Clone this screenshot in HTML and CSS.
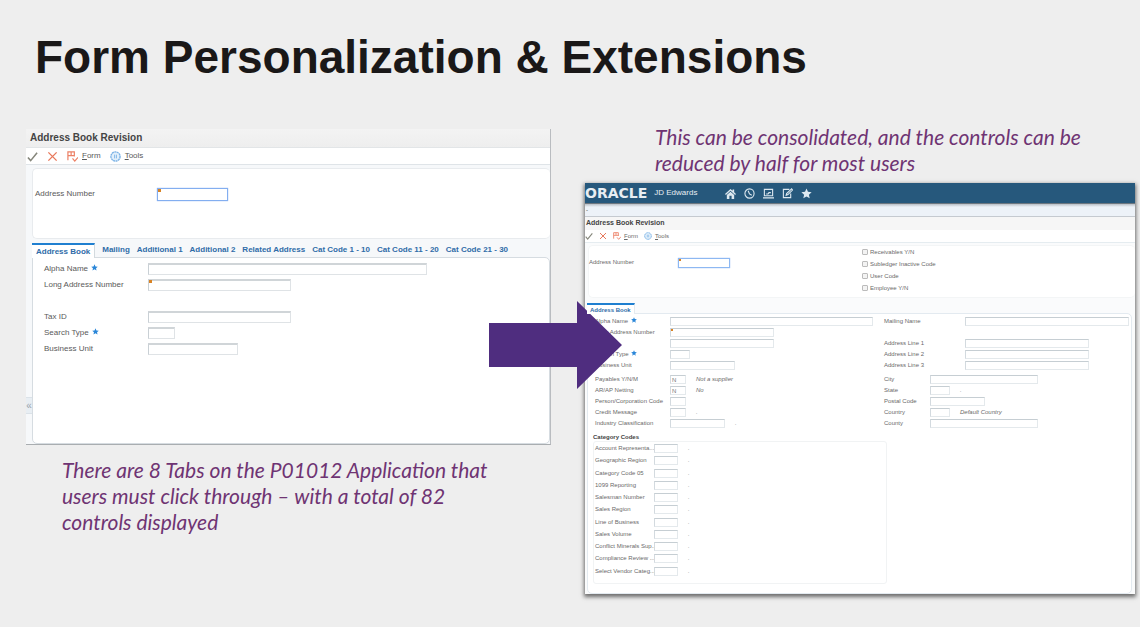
FILE: index.html
```html
<!DOCTYPE html>
<html lang="en">
<head>
    <meta charset="UTF-8">
    <meta name="viewport" content="width=device-width, initial-scale=1.0">
    <title>Form Personalization &amp; Extensions</title>
    <link rel="stylesheet" href="styles.css">
</head>
<body>
    <!-- Shared icons -->
    <svg class="sprite" aria-hidden="true">
        <symbol id="i-check" viewBox="0 0 12 12"><path d="M1 7l3 3.500L11 2" fill="none" stroke="#85867b" stroke-width="1.700"/></symbol>
        <symbol id="i-cross" viewBox="0 0 12 12"><path d="M1.500 1.500l9 9M10.500 1.500l-9 9" fill="none" stroke="#e8795c" stroke-width="1.500"/></symbol>
        <symbol id="i-form" viewBox="0 0 12 12"><path d="M1 10V1h7v5M1 5h7M4.500 1v4M6 8l2.500 3L12 7" fill="none" stroke="#ec8065" stroke-width="1.300"/></symbol>
        <symbol id="i-gear" viewBox="0 0 12 12"><circle cx="6" cy="6" r="5" fill="#e3f0fb" stroke="#7cb3e6" stroke-width="1.500" stroke-dasharray="2.200 .5"/><path d="M5 4v4M7 4v4" fill="none" stroke="#7cb3e6"/></symbol>
        <symbol id="i-star" viewBox="0 0 12 12"><path d="M6 .5l1.600 3.700 4 .4-3 2.700.9 4L6 9.200l-3.500 2.100.9-4-3-2.700 4-.4z"/></symbol>
    </svg>

    <main class="slide">
        <h1>Form Personalization &amp; Extensions</h1>

        <div class="columns">
            <section class="before">
                <div class="screen">
                    <h2 class="form-title">Address Book Revision</h2>
                    <div class="toolbar">
                        <button aria-label="OK"><svg><use href="#i-check"/></svg></button>
                        <button aria-label="Cancel"><svg><use href="#i-cross"/></svg></button>
                        <button><svg><use href="#i-form"/></svg><span><u>F</u>orm</span></button>
                        <button><svg><use href="#i-gear"/></svg><span><u>T</u>ools</span></button>
                    </div>
                    <div class="header-panel">
                        <label for="b-number">Address Number</label>
                        <span class="key required-mark"><input id="b-number" type="text"></span>
                    </div>
                    <div class="tabs">
                        <button class="active">Address Book</button>
                        <button>Mailing</button>
                        <button>Additional 1</button>
                        <button>Additional 2</button>
                        <button>Related Address</button>
                        <button>Cat Code 1 - 10</button>
                        <button>Cat Code 11 - 20</button>
                        <button>Cat Code 21 - 30</button>
                    </div>
                    <div class="tab-body">
                        <div class="field"><label for="b-alpha">Alpha Name <svg class="star"><use href="#i-star"/></svg></label><input id="b-alpha" class="w-full" type="text"></div>
                        <div class="field"><label for="b-long">Long Address Number</label><span class="required-mark w-half"><input id="b-long" type="text"></span></div>
                        <div class="field"></div>
                        <div class="field"><label for="b-tax">Tax ID</label><input id="b-tax" class="w-half" type="text"></div>
                        <div class="field"><label for="b-search">Search Type <svg class="star"><use href="#i-star"/></svg></label><input id="b-search" class="w-code" type="text"></div>
                        <div class="field"><label for="b-unit">Business Unit</label><input id="b-unit" class="w-unit" type="text"></div>
                    </div>
                    <button class="collapse">«</button>
                </div>
                <p class="caption">There are 8 Tabs on the P01012 Application that users must click through – with a total of 82 controls displayed</p>
            </section>

            <section class="after">
                <p class="caption">This can be consolidated, and the controls can be reduced by half for most users</p>
                <div class="screen small">
                    <div class="navbar">
                        <span class="oracle">ORACLE</span><span class="product">JD Edwards</span>
                        <nav>
                            <button aria-label="Home"><svg viewBox="0 0 12 12"><path d="M6 1L0 6.500l1 1 5-4.500 5 4.500 1-1-2-1.900V1.500H8.300V3z"/><path d="M2 7.500L6 4l4 3.500V12H7.200V8.500H4.800V12H2z"/></svg></button>
                            <button aria-label="Recent"><svg viewBox="0 0 12 12"><circle cx="6" cy="6" r="5" class="line"/><path d="M4.500 3L6 6.500l2.500 1.500" class="line"/></svg></button>
                            <button aria-label="Reports"><svg viewBox="0 0 12 12"><path d="M1.500 1.500h9v7h-9zM0 10.800h12M3.500 6.500h2l1-1.500h2" class="line"/></svg></button>
                            <button aria-label="Edit"><svg viewBox="0 0 12 12"><path d="M8 1.500H1.500v9h8V6M4.500 8l.5-2 5.500-5 1 1.200-5 5z" class="line"/></svg></button>
                            <button aria-label="Favorites"><svg><use href="#i-star"/></svg></button>
                        </nav>
                    </div>
                    <div class="crumbs">-</div>
                    <h2 class="form-title">Address Book Revision</h2>
                    <div class="toolbar">
                        <button aria-label="OK"><svg><use href="#i-check"/></svg></button>
                        <button aria-label="Cancel"><svg><use href="#i-cross"/></svg></button>
                        <button><svg><use href="#i-form"/></svg><span><u>F</u>orm</span></button>
                        <button><svg><use href="#i-gear"/></svg><span><u>T</u>ools</span></button>
                    </div>
                    <div class="header-panel">
                        <div class="number">
                            <label for="a-number">Address Number</label>
                            <span class="key required-mark"><input id="a-number" type="text"></span>
                        </div>
                        <div class="checks">
                            <label><input type="checkbox"> Receivables Y/N</label>
                            <label><input type="checkbox"> Subledger Inactive Code</label>
                            <label><input type="checkbox"> User Code</label>
                            <label><input type="checkbox"> Employee Y/N</label>
                        </div>
                    </div>
                    <div class="tabs"><button class="active">Address Book</button></div>
                    <div class="tab-body">
                        <div class="pair">
                            <div class="group">
                                <div class="field"><label for="a-alpha">Alpha Name <svg class="star"><use href="#i-star"/></svg></label><input id="a-alpha" class="w-full" type="text"></div>
                                <div class="field"><label for="a-long">Long Address Number</label><span class="required-mark w-half"><input id="a-long" type="text"></span></div>
                                <div class="field"><label for="a-tax">Tax ID</label><input id="a-tax" class="w-half" type="text"></div>
                                <div class="field"><label for="a-search">Search Type <svg class="star"><use href="#i-star"/></svg></label><input id="a-search" class="w-code" type="text"></div>
                                <div class="field"><label for="a-unit">Business Unit</label><input id="a-unit" class="w-unit" type="text"></div>
                            </div>
                            <div class="group">
                                <div class="field"><label for="m-name">Mailing Name</label><input id="m-name" class="w-full" type="text"></div>
                                <div class="field"></div>
                                <div class="field"><label for="m-1">Address Line 1</label><input id="m-1" class="w-line" type="text"></div>
                                <div class="field"><label for="m-2">Address Line 2</label><input id="m-2" class="w-line" type="text"></div>
                                <div class="field"><label for="m-3">Address Line 3</label><input id="m-3" class="w-line" type="text"></div>
                            </div>
                            <div class="group">
                                <div class="field"><label for="a-pay">Payables Y/N/M</label><input id="a-pay" class="w-flag" type="text" value="N"><em>Not a supplier</em></div>
                                <div class="field"><label for="a-net">AR/AP Netting</label><input id="a-net" class="w-flag" type="text" value="N"><em>No</em></div>
                                <div class="field"><label for="a-person">Person/Corporation Code</label><input id="a-person" class="w-flag" type="text"></div>
                                <div class="field"><label for="a-credit">Credit Message</label><input id="a-credit" class="w-flag" type="text"><em>.</em></div>
                                <div class="field"><label for="a-industry">Industry Classification</label><input id="a-industry" class="w-postal" type="text"><em>.</em></div>
                            </div>
                            <div class="group place">
                                <div class="field"><label for="p-city">City</label><input id="p-city" class="w-city" type="text"></div>
                                <div class="field"><label for="p-state">State</label><input id="p-state" class="w-code" type="text"><em>.</em></div>
                                <div class="field"><label for="p-postal">Postal Code</label><input id="p-postal" class="w-postal" type="text"></div>
                                <div class="field"><label for="p-country">Country</label><input id="p-country" class="w-code" type="text"><em>Default Country</em></div>
                                <div class="field"><label for="p-county">County</label><input id="p-county" class="w-city" type="text"></div>
                            </div>
                        </div>
                        <h3>Category Codes</h3>
                        <div class="categories">
                            <div class="field"><label for="c-1">Account Representa...</label><input id="c-1" type="text"><em>.</em></div>
                            <div class="field"><label for="c-2">Geographic Region</label><input id="c-2" type="text"><em>.</em></div>
                            <div class="field"><label for="c-3">Category Code 05</label><input id="c-3" type="text"><em>.</em></div>
                            <div class="field"><label for="c-4">1099 Reporting</label><input id="c-4" type="text"><em>.</em></div>
                            <div class="field"><label for="c-5">Salesman Number</label><input id="c-5" type="text"><em>.</em></div>
                            <div class="field"><label for="c-6">Sales Region</label><input id="c-6" type="text"><em>.</em></div>
                            <div class="field"><label for="c-7">Line of Business</label><input id="c-7" type="text"><em>.</em></div>
                            <div class="field"><label for="c-8">Sales Volume</label><input id="c-8" type="text"><em>.</em></div>
                            <div class="field"><label for="c-9">Conflict Minerals Sup...</label><input id="c-9" type="text"><em>.</em></div>
                            <div class="field"><label for="c-10">Compliance Review ...</label><input id="c-10" type="text"><em>.</em></div>
                            <div class="field"><label for="c-11">Select Vendor Categ...</label><input id="c-11" type="text"><em>.</em></div>
                        </div>
                    </div>
                    <svg class="arrow" viewBox="0 0 133 88"><path d="M0 22h88V0l45 44-45 44V66H0z"/></svg>
                </div>
            </section>
        </div>
    </main>
</body>
</html>
```

FILE: styles.css
```css
* {
    box-sizing: border-box;
}

body {
    margin: 0;
    background-color: #eeeeee;
    font-family: "Liberation Sans", Arial, sans-serif;
    color: #5a5a5a;
}

.sprite {
    display: none;
}

.slide {
    padding: 28px 5px 28px 26px;
}

h1 {
    margin: 0 0 38px 9px;
    font-size: 46px;
    line-height: 58px;
    color: #1a1818;
}

.columns {
    display: grid;
    grid-template-columns: 525fr 550fr;
    column-gap: 34px;
}

.caption {
    margin: 0;
    font-family: Lato, sans-serif;
    font-size: 21px;
    font-style: italic;
    line-height: 26px;
    color: #6f3473;
}

.before {
    padding-top: 5px;
}

.before .caption {
    margin: 12px 50px 0 36px;
}

.after .caption {
    margin: 0 40px 7px 70px;
}

/* Application window */
.screen {
    position: relative;
    background-color: #f6f8fa;
    border-right: 1px solid #b9bcc0;
    border-bottom: 1px solid #a9adb0;
    font-size: 8px;
    line-height: 12px;
}

button {
    padding: 0;
    border: none;
    background: none;
    font: inherit;
    color: inherit;
    cursor: pointer;
}

.form-title {
    margin: 0;
    padding-left: 4px;
    height: 19px;
    font-size: 10px;
    line-height: 17px;
    color: #444444;
    background: linear-gradient(#f3f3f3, #eeeeee);
    border-bottom: 1px solid #e2e5e7;
}

.toolbar {
    display: flex;
    align-items: center;
    gap: 9px;
    height: 17px;
    padding-left: 1px;
    background-color: #ffffff;
    border-bottom: 1px solid #dfe4e8;
}

.toolbar button {
    display: flex;
    align-items: center;
    gap: 4px;
}

.toolbar svg {
    width: 11px;
    height: 11px;
}

.header-panel {
    display: flex;
    height: 71px;
    margin: 3px 0 4px 6px;
    padding: 19px 2px 0;
    background-color: #ffffff;
    border: 1px solid #e8ebee;
    border-right: none;
    border-radius: 5px;
}

.header-panel label {
    width: 122px;
}

input[type="text"] {
    display: block;
    height: 12px;
    min-width: 0;
    padding: 0 2px;
    border: 1px solid #dfe3e6;
    border-top: 2px solid #d0d5d8;
    border-left-color: #c9d0d5;
    background-color: #ffffff;
    font: inherit;
    color: #777777;
    outline: none;
}

.required-mark {
    position: relative;
}

.required-mark::before {
    content: "";
    position: absolute;
    left: 1px;
    top: 1px;
    width: 3px;
    height: 3px;
    background-color: #d98324;
}

.required-mark input[type="text"] {
    width: 100%;
}

.key {
    width: 71px;
}

.key input[type="text"] {
    height: 13px;
    border: 1px solid #83aef0;
    box-shadow: 0 0 1px #83aef0;
}

.tabs {
    display: flex;
    gap: 7px;
    height: 14px;
    margin-left: 6px;
    font-weight: bold;
    color: #2f6ca8;
}

.tabs .active {
    position: relative;
    z-index: 1;
    height: 15px;
    padding: 0 4px;
    background-color: #ffffff;
    border-top: 2px solid #1f7fd0;
    border-right: 1px solid #d3dade;
}

.tab-body {
    height: 187px;
    margin-left: 6px;
    padding: 5px 11px;
    background-color: #ffffff;
    border: 1px solid #d6dce1;
    border-radius: 0 5px 5px 5px;
}

.field {
    display: flex;
    height: 16px;
}

.field label {
    flex: none;
    width: 104px;
    white-space: nowrap;
}

.field em {
    margin-left: 10px;
}

.star {
    width: 7px;
    height: 7px;
    margin-left: 1px;
    fill: #2a86d8;
}

.w-full { width: 279px; }
.w-half { width: 143px; }
.w-unit { width: 90px; }
.w-code { width: 27px; }

.collapse {
    position: absolute;
    left: 0;
    bottom: 30px;
    width: 6px;
    height: 17px;
    background-color: #e8eef3;
    border: 1px solid #dbe2e8;
    border-width: 1px 0;
    font-size: 10px;
    color: #9aa3aa;
}

/* Consolidated window */
.small {
    background-color: #fafbfc;
    border: none;
    box-shadow: 0 2px 4px 1px rgba(0, 0, 0, 0.55);
    font-size: 6px;
    line-height: 8px;
    color: #6a6a6a;
}

.navbar {
    display: flex;
    align-items: center;
    height: 21px;
    border-bottom: 1px solid #6d7780;
    background-color: #26587c;
    color: #e8eef3;
}

.oracle {
    font-family: "DejaVu Sans", sans-serif;
    font-size: 14px;
    font-weight: bold;
    line-height: 18px;
}

.product {
    margin-left: 7px;
    font-size: 8px;
}

.navbar nav {
    display: flex;
    gap: 8px;
    margin-left: 28px;
}

.navbar button {
    display: flex;
}

.navbar svg {
    width: 11px;
    height: 11px;
    fill: #dde8f0;
}

.navbar .line {
    fill: none;
    stroke: #dde8f0;
    stroke-width: 1.2;
}

.crumbs {
    height: 13px;
    padding: 2px 1px;
    color: #333333;
    background: linear-gradient(#b9bfc6, #edf2f8 3px);
    border-bottom: 1px solid #c5cad0;
}

.small .form-title {
    height: 13px;
    padding-left: 1px;
    font-size: 7px;
    line-height: 12px;
    background: #f6f6f6;
    border: none;
}

.small .toolbar {
    gap: 6px;
    height: 13px;
    padding-left: 0;
    border-color: #e5ecf0;
}

.small .toolbar button {
    gap: 3px;
}

.small .toolbar svg {
    width: 8px;
    height: 8px;
}

.small .header-panel {
    height: 53px;
    margin: 2px 0 5px 3px;
    padding: 0;
    border-color: #f3f5f6;
}

.number {
    display: flex;
    width: 50%;
    padding: 12px 0 0;
}

.small .number label {
    width: 89px;
}

.small .key {
    width: 52px;
}

.small input[type="text"] {
    height: 9px;
    padding: 0 1px;
    border: 1px solid #e4e9ec;
    border-top-color: #c6ced3;
    border-left-color: #d3dadf;
}

.small .key input[type="text"] {
    height: 10px;
    border-color: #8db8f2;
}

.checks {
    display: grid;
    grid-auto-rows: 12px;
}

.small .checks label {
    display: flex;
    align-items: center;
    gap: 2px;
    width: auto;
}

.checks input {
    appearance: none;
    width: 6px;
    height: 6px;
    margin: 0;
    border: 1px solid #bbbbbb;
    border-radius: 1px;
    background-color: #f3f3f3;
}

.small .tabs {
    height: 10px;
    margin-left: 2px;
}

.small .tabs .active {
    height: 11px;
    padding: 0 3px;
    border-right-color: #e5ebef;
}

.small .tab-body {
    height: auto;
    margin: 0 3px 0 2px;
    padding: 3px 2px 9px 7px;
    border-color: #e3eaf0;
}

.small .required-mark::before {
    width: 2px;
    height: 2px;
}

.small .star {
    width: 6px;
    height: 6px;
}

.pair {
    display: grid;
    grid-template-columns: 289fr 245fr;
    row-gap: 3px;
}

.small .field {
    height: 11px;
}

.small .field label {
    width: 75px;
}

.small .group:nth-child(2) label {
    width: 81px;
}

.small .place label {
    width: 46px;
}

.small .w-full { width: 203px; }
.small .w-half { width: 104px; }
.small .w-unit { width: 65px; }
.small .w-code { width: 20px; }
.small .w-flag { width: 16px; }
.small .w-line { width: 124px; }
.small .w-city { width: 108px; }
.small .w-postal { width: 55px; }
.small .group:nth-child(2) .w-full { width: 164px; }

h3 {
    margin: 3px 0 0 -2px;
    font-size: 6px;
    line-height: 8px;
    color: #444444;
}

.categories {
    display: grid;
    grid-auto-rows: 1fr;
    width: 55%;
    height: 143px;
    margin-left: -2px;
    padding: 2px 1px 4px;
    border: 1px solid #f1f3f4;
    border-radius: 3px;
}

.categories .field {
    height: auto;
}

.small .categories label {
    width: 59px;
}

.categories input[type="text"] {
    width: 24px;
}

/* Arrow between the two windows */
.arrow {
    position: absolute;
    left: -96px;
    top: 118px;
    width: 133px;
    height: 88px;
    fill: #4f2d7f;
}
```
